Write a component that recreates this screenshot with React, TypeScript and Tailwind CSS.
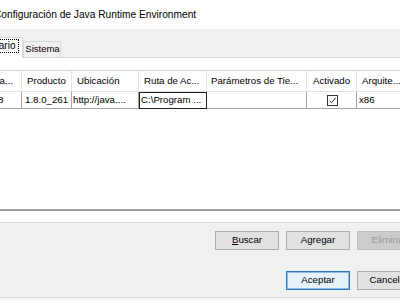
import React from "react";

const font = { fontFamily: '"Liberation Sans", Arial, sans-serif' };

function Check() {
  return (
    <span className="flex h-[11px] w-[11px] items-center justify-center border border-[#333333] bg-white">
      <svg width="9" height="9" viewBox="0 0 9 9">
        <path d="M1.5 4.6 L3.6 6.7 L7.6 1.8" fill="none" stroke="#333333" strokeWidth="1" />
      </svg>
    </span>
  );
}

function Btn({ children, disabled, primary }: { children: React.ReactNode; disabled?: boolean; primary?: boolean }) {
  return (
    <div
      className={
        "flex h-[19px] w-[64px] shrink-0 items-center justify-center overflow-hidden whitespace-nowrap border text-[9.7px] " +
        (disabled
          ? "border-[#bfbfbf] bg-[#cccccc] text-[#9a9a9a]"
          : primary
          ? "border-[#2a78bd] bg-[#e5f1fb] text-black shadow-[inset_0_0_0_1px_#8cbce3]"
          : "border-[#adadad] bg-[#e1e1e1] text-black")
      }
    >
      {children}
    </div>
  );
}

export default function App() {
  const grid = "grid grid-cols-[34px_50px_67px_68px_100px_50px_70px]";
  return (
    <div className="flex h-[300px] w-[400px] flex-col overflow-hidden bg-[#f0f0f0]" style={font}>
      <div className="flex h-[29px] shrink-0 items-center bg-white">
        <span className="-ml-[6px] whitespace-nowrap text-[10.2px] text-black">
          Configuración de Java Runtime Environment
        </span>
      </div>

      <div className="relative z-10 flex h-[28px] shrink-0 items-end">
        <div className="-mb-px -ml-[25px] flex h-[21px] items-start border border-b-0 border-[#d9d9d9] bg-white pl-[4px] pr-[4px] pt-[2px]">
          <span className="py-[1px] pl-[1px] pr-[3px] text-[10px] leading-[10px] text-black outline-1 outline-dotted outline-black">
            Usuario
          </span>
        </div>
        <div className="flex h-[16px] w-[38px] items-center justify-center border border-b-0 border-[#d9d9d9] bg-[#f0f0f0] text-[9.5px] text-black">
          Sistema
        </div>
      </div>

      <div className="flex h-[166px] shrink-0 flex-col border-y border-[#d9d9d9] bg-white">
        <div className="flex h-[153px] flex-col border-b-2 border-[#a0a0a0] pt-[12px]">
          <div className={grid + " -ml-[12px] h-[22px] border-t border-[#d5d5d5] text-[9.7px] text-black"}>
            <div className="flex items-center overflow-hidden whitespace-nowrap border-r border-b border-[#e3e3e3] pl-[3px]">Pla...</div>
            <div className="flex items-center overflow-hidden whitespace-nowrap border-r border-b border-[#e3e3e3] pl-[5px]">Producto</div>
            <div className="flex items-center overflow-hidden whitespace-nowrap border-r border-b border-[#e3e3e3] pl-[5px]">Ubicación</div>
            <div className="flex items-center overflow-hidden whitespace-nowrap border-r border-b border-[#e3e3e3] pl-[5px]">Ruta de Ac...</div>
            <div className="flex items-center overflow-hidden whitespace-nowrap border-r border-b border-[#e3e3e3] pl-[4px]">Parámetros de Tie...</div>
            <div className="flex items-center justify-center overflow-hidden whitespace-nowrap border-r border-b border-[#e3e3e3]">Activado</div>
            <div className="flex items-center overflow-hidden whitespace-nowrap border-b border-[#e3e3e3] pl-[5px]">Arquite...</div>
          </div>
          <div className={grid + " -ml-[12px] h-[17px] text-[9.7px] text-black"}>
            <div className="flex items-center overflow-hidden whitespace-nowrap border-r border-b border-[#a6a6a6] pl-[2px]">1.8</div>
            <div className="flex items-center overflow-hidden whitespace-nowrap border-r border-b border-[#a6a6a6] pl-[3px]">1.8.0_261</div>
            <div className="flex items-center overflow-hidden whitespace-nowrap border-r border-b border-[#a6a6a6] pl-[1px]">http://java....</div>
            <div className="flex items-center overflow-hidden whitespace-nowrap border border-[#222222] pl-[1px]">C:\Program ...</div>
            <div className="border-r border-b border-[#a6a6a6]"></div>
            <div className="flex items-center justify-center border-r border-b border-[#a6a6a6] pl-[2px]">
              <Check />
            </div>
            <div className="flex items-center overflow-hidden whitespace-nowrap border-b border-[#a6a6a6] pl-[2px]">x86</div>
          </div>
        </div>
      </div>

      <div className="flex shrink-0 gap-[7px] pl-[215px] pt-[8px]">
        <Btn>
          <span className="underline">B</span>uscar
        </Btn>
        <Btn>Agregar</Btn>
        <Btn disabled>Eliminar</Btn>
      </div>

      <div className="mt-[21px] flex shrink-0 gap-[7px] pl-[286px]">
        <Btn primary>Aceptar</Btn>
        <Btn>Cancelar</Btn>
      </div>

      <div className="mt-auto h-[3px] shrink-0 border-t border-[#dcdcdc]"></div>
    </div>
  );
}
